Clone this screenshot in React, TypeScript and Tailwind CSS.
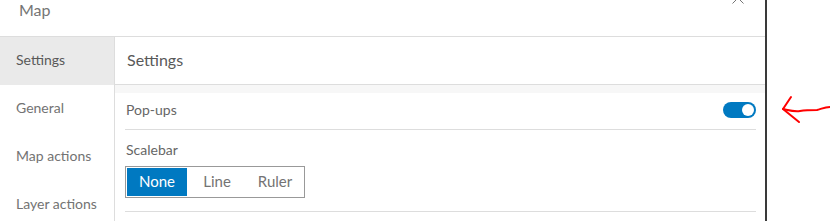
import { useState } from 'react';

const navItems = ['Settings', 'General', 'Map actions', 'Layer actions'];
const scaleOptions = [
  { label: 'None', width: 'w-[60px]' },
  { label: 'Line', width: 'w-[60px]' },
  { label: 'Ruler', width: 'w-[56px]' },
];

export default function App() {
  const [active, setActive] = useState('Settings');
  const [popups, setPopups] = useState(true);
  const [scalebar, setScalebar] = useState('None');

  return (
    <div className="flex h-[221px] w-[830px] overflow-hidden bg-white font-['Lato',sans-serif] text-[14px] text-[#6e6e6e]">
      <div className="flex w-[766px] flex-col">
        {/* dialog header */}
        <div className="flex h-[37px] shrink-0 items-start border-b border-[#dddddd]">
          <h2 className="pl-[19px] text-[16px] leading-5 text-[#757575]">Map</h2>
          <button className="ml-auto mr-[21px] -mt-[8px] text-[#757575]">
            <svg width="12" height="12" viewBox="0 0 12 12" fill="none" stroke="currentColor" strokeWidth="1">
              <path d="M0.5 0.5l11 11M11.5 0.5l-11 11" />
            </svg>
          </button>
        </div>

        <div className="flex flex-1">
          {/* side nav */}
          <nav className="flex w-[115px] shrink-0 flex-col border-r border-[#dddddd]">
            {navItems.map((item) => (
              <button
                key={item}
                onClick={() => setActive(item)}
                className={`flex h-12 shrink-0 items-center pb-[3px] pl-4 text-left ${
                  active === item ? 'bg-[#eaeaea] text-[#595959]' : 'text-[#737373]'
                }`}
              >
                {item}
              </button>
            ))}
          </nav>

          {/* content */}
          <div className="flex flex-1 flex-col">
            <div className="flex h-12 shrink-0 items-center border-b border-[#dddddd] pb-[2px] pl-3 text-[16px] text-[#595959]">
              Settings
            </div>
            <div className="h-2 shrink-0 bg-[#f7f7f7]" />
            <div className="pl-[10px] pr-[9px]">
              <div className="flex h-[37px] items-center justify-between border-b border-[#dddddd] pl-px">
                <span className="-mt-[3px] text-[#666666]">Pop-ups</span>
                <button
                  onClick={() => setPopups(!popups)}
                  className={`-mt-[2px] flex h-[16px] w-[33px] items-center rounded-full px-[2px] ${
                    popups ? 'justify-end bg-[#0079c1]' : 'justify-start bg-[#bbbbbb]'
                  }`}
                >
                  <span className="h-[12px] w-[12px] rounded-full bg-white" />
                </button>
              </div>
              <div className="border-b border-[#dddddd] pb-[13px] pt-[10px]">
                <div className="pl-px leading-5 text-[#666666]">Scalebar</div>
                <div className="mt-[6px] inline-flex border border-[#999999] p-px">
                  {scaleOptions.map((opt) => (
                    <button
                      key={opt.label}
                      onClick={() => setScalebar(opt.label)}
                      className={`h-[28px] pb-[2px] text-[15px] ${opt.width} ${
                        scalebar === opt.label ? 'bg-[#0079c1] text-white' : 'text-[#737373]'
                      }`}
                    >
                      {opt.label}
                    </button>
                  ))}
                </div>
              </div>
            </div>
          </div>
        </div>
      </div>

      <div className="w-[2px] shrink-0 bg-[#3a3a3a]" />

      {/* annotation */}
      <div className="flex-1 pl-[13px] pt-[95px]">
        <svg width="50" height="30" viewBox="0 0 50 30" fill="none" stroke="#ff0000" strokeWidth="2" strokeLinecap="round" strokeLinejoin="round">
          <path d="M11 2 L3 14 L19 27" />
          <path d="M3 14 C8 15 14 17 20 16 C26 15 31 15 37 15 C41 14 45 12 50 12" />
        </svg>
      </div>
    </div>
  );
}
